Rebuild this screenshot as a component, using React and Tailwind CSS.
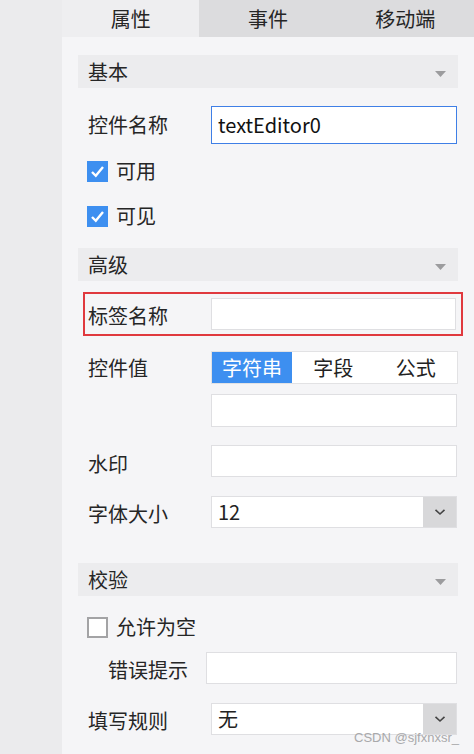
import React from 'react';

const font = { fontFamily: '"Noto Sans CJK SC", "Noto Sans", sans-serif' };

const SectionHeader = ({ title, className = '' }) => (
    <div className={`h-[33px] shrink-0 bg-[#ececee] flex items-center justify-between pl-[10px] pr-[12px] ${className}`}>
        <span className="text-[20px] text-[#262626]">{title}</span>
        <svg width="11" height="6" viewBox="0 0 11 6" className="mt-[4px]">
            <path d="M0 0 H11 L5.5 6 Z" fill="#9c9c9e" />
        </svg>
    </div>
);

const Input = ({ value = '', className = '' }) => (
    <div className={`bg-white border border-[#dfdfe2] flex items-center px-[6px] text-[20px] text-[#222] ${className}`}>
        {value}
    </div>
);

const Select = ({ value }) => (
    <div className="w-[246px] h-[32px] bg-white border border-[#dfdfe2] flex">
        <div className="flex-1 flex items-center px-[6px] text-[20px] text-[#222]">{value}</div>
        <div className="w-[33px] bg-[#d8d8da] flex items-center justify-center">
            <svg width="12" height="8" viewBox="0 0 12 8">
                <path d="M1.5 1.8 L6 6 L10.5 1.8" fill="none" stroke="#444" strokeWidth="1.6" />
            </svg>
        </div>
    </div>
);

const CheckRow = ({ label, checked, className = '' }) => (
    <div className={`h-[30px] shrink-0 flex items-center pl-[9px] ${className}`}>
        {checked ? (
            <div className="w-[21px] h-[21px] bg-[#3d8ff0] flex items-center justify-center">
                <svg width="15" height="13" viewBox="0 0 15 13">
                    <path d="M2 7 L5.8 10.8 L13 2" fill="none" stroke="white" strokeWidth="2.4" />
                </svg>
            </div>
        ) : (
            <div className="w-[21px] h-[21px] bg-white border-2 border-[#a3a3a5]" />
        )}
        <span className="ml-[8px] text-[20px] text-[#262626]">{label}</span>
    </div>
);

const Label = ({ children, className = '' }) => (
    <span className={`text-[20px] leading-[24px] text-[#262626] shrink-0 ${className}`}>{children}</span>
);

export default function App() {
    return (
        <div style={font} className="w-[474px] h-[754px] flex overflow-hidden relative">
            <div className="w-[62px] shrink-0 bg-[#ebebed]" />
            <div className="flex-1 min-w-0 bg-[#f5f5f7] flex flex-col">
                {/* Tabs */}
                <div className="grid grid-cols-3 h-[37px] shrink-0">
                    <div className="bg-[#eeeef0] flex items-center justify-center text-[20px] text-[#262626]">属性</div>
                    <div className="bg-[#dcdcde] flex items-center justify-center text-[20px] text-[#262626]">事件</div>
                    <div className="bg-[#dcdcde] flex items-center justify-center text-[20px] text-[#262626]">移动端</div>
                </div>

                <div className="px-4 pt-[18px] flex flex-col">
                    <SectionHeader title="基本" />

                    <div className="mt-[18px] h-[38px] flex items-center">
                        <Label className="w-[133px] pl-[10px]">控件名称</Label>
                        <div className="w-[246px] h-[38px] bg-white border-[1.5px] border-[#3f7fe6] flex items-center px-[6px] text-[20px] text-[#111]">
                            textEditor0
                        </div>
                    </div>

                    <CheckRow label="可用" checked className="mt-[12px]" />
                    <CheckRow label="可见" checked className="mt-[15px]" />

                    <SectionHeader title="高级" className="mt-[17px]" />

                    {/* highlighted row */}
                    <div className="mt-[11px] ml-[5px] w-[380px] h-[44px] shrink-0 border-2 border-[#e0393e] flex items-center">
                        <Label className="w-[126px] pl-[3px] pt-[4px]">标签名称</Label>
                        <Input className="w-[245px] h-[32px]" />
                    </div>

                    <div className="mt-[15px] h-[33px] flex items-center">
                        <Label className="w-[133px] pl-[10px]">控件值</Label>
                        <div className="w-[247px] h-[33px] bg-white border border-[#e2e2e4] grid grid-cols-[80px_1fr_1fr] text-[20px]">
                            <div className="bg-[#3d8ff0] text-white flex items-center justify-center">字符串</div>
                            <div className="flex items-center justify-center text-[#222]">字段</div>
                            <div className="flex items-center justify-center text-[#222]">公式</div>
                        </div>
                    </div>

                    <div className="mt-[10px] h-[33px] flex">
                        <div className="w-[133px]" />
                        <Input className="w-[246px] h-[33px]" />
                    </div>

                    <div className="mt-[18px] h-[32px] flex items-center">
                        <Label className="w-[133px] pl-[10px] pt-[5px]">水印</Label>
                        <Input className="w-[246px] h-[32px]" />
                    </div>

                    <div className="mt-[19px] h-[32px] flex items-center">
                        <Label className="w-[133px] pl-[10px] pt-[4px]">字体大小</Label>
                        <Select value="12" />
                    </div>

                    <SectionHeader title="校验" className="mt-[35px]" />

                    <CheckRow label="允许为空" className="mt-[16px] pl-[8px]" />

                    <div className="mt-[10px] h-[32px] flex items-center">
                        <Label className="w-[128px] pl-[30px] pt-[3px]">错误提示</Label>
                        <Input className="w-[251px] h-[32px]" />
                    </div>

                    <div className="mt-[19px] h-[32px] flex items-center">
                        <Label className="w-[133px] pl-[10px] pt-[4px]">填写规则</Label>
                        <Select value="无" />
                    </div>
                </div>
            </div>

            {/* watermark */}
            <div
                className="absolute right-[15px] bottom-[7px] text-[13px] text-[#a9a9ab]"
                style={{ fontFamily: '"Liberation Sans", sans-serif' }}
            >
                CSDN @sjfxnxsr_
            </div>
        </div>
    );
}
